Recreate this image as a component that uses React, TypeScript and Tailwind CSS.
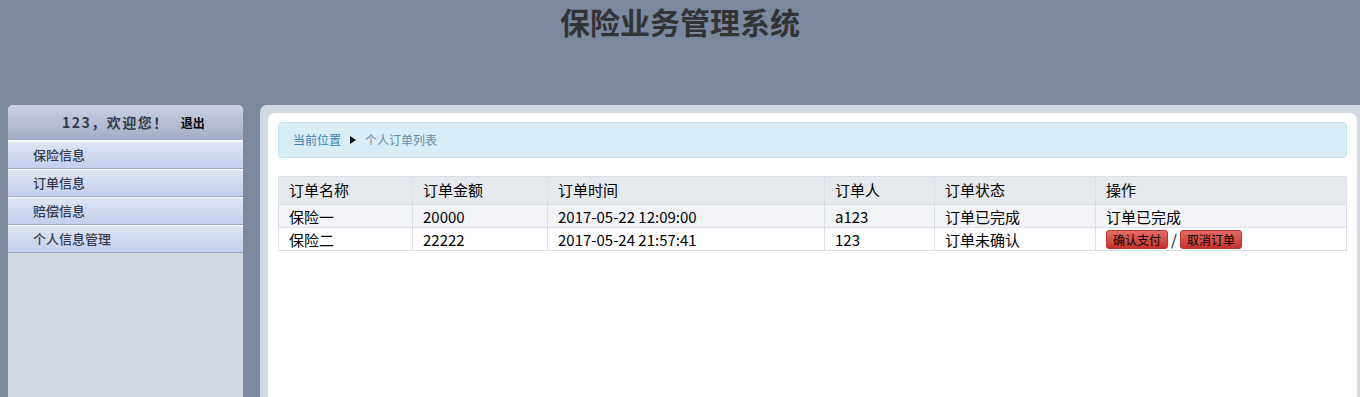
import React from 'react'

const font = { fontFamily: '"Noto Sans CJK SC", "Noto Sans", sans-serif' }

const menu = ['保险信息', '订单信息', '赔偿信息', '个人信息管理']

const orders = [
  { name: '保险一', amount: '20000', time: '2017-05-22 12:09:00', user: 'a123', status: '订单已完成', done: true },
  { name: '保险二', amount: '22222', time: '2017-05-24 21:57:41', user: '123', status: '订单未确认', done: false },
]

const cols = ['w-[134px]', 'w-[135px]', 'w-[277px]', 'w-[110px]', 'w-[161px]', '']

function RedButton({ children }: { children: React.ReactNode }) {
  return (
    <button className="h-[19px] px-[6px] text-[12px] leading-[17px] text-black rounded-[3px] border border-[#b33a36] bg-gradient-to-b from-[#e46a66] to-[#c9302c]">
      {children}
    </button>
  )
}

export default function App() {
  return (
    <div className="h-screen overflow-hidden bg-[#7b889e] flex flex-col" style={font}>
      {/* Header */}
      <div className="h-[105px] shrink-0 flex justify-center">
        <h1 className="text-[30px] font-bold text-[#333333] leading-[42px]">保险业务管理系统</h1>
      </div>

      <div className="flex-1 flex min-h-0">
        {/* Sidebar */}
        <div className="ml-2 w-[235px] bg-[#d2d8e2] rounded-t-[5px] overflow-hidden">
          <div className="h-[36px] flex items-center bg-gradient-to-b from-[#cbd1e2] to-[#a4acc6] border-b border-white">
            <span className="ml-[54px] text-[14px] font-bold text-[#333b4c] tracking-[1.5px]">123，欢迎您！</span>
            <span className="ml-[12px] text-[12px] font-bold text-black">退出</span>
          </div>
          {menu.map((m) => (
            <div
              key={m}
              className="h-[28px] flex items-center pl-[25px] text-[13px] text-[#333b4c] font-medium bg-gradient-to-b from-[#e0e4f4] to-[#c3cfee] border-b border-[#9aa5c2] border-t border-t-white first:border-t-0"
            >
              {m}
            </div>
          ))}
        </div>

        {/* Main */}
        <div className="ml-[17px] flex-1 bg-[#d2d8e2] rounded-tl-[7px] pl-2 pt-2 pr-[3px]">
          <div className="h-full bg-white rounded-t-[7px] px-[10px] pt-[9px]">
            <div className="h-[36px] flex items-center pl-[14px] bg-[#d8edf6] border border-[#c5e6f1] rounded-[4px] text-[12px]">
              <span className="text-[#3d84b0]">当前位置</span>
              <svg width="6" height="8" viewBox="0 0 6 8" className="ml-[9px] mr-[9px]">
                <path d="M0 0 L6 4 L0 8 Z" fill="#111" />
              </svg>
              <span className="text-[#6d8ba8]">个人订单列表</span>
            </div>

            <table className="mt-[18px] w-full border-collapse text-[15px] text-black">
              <thead>
                <tr className="bg-[#e6e9ee] h-[28px]">
                  {['订单名称', '订单金额', '订单时间', '订单人', '订单状态', '操作'].map((h, i) => (
                    <th key={h} className={`${cols[i]} border border-[#dcdfe5] text-left font-normal pl-[10px] py-0`}>
                      {h}
                    </th>
                  ))}
                </tr>
              </thead>
              <tbody>
                {orders.map((o, idx) => (
                  <tr key={o.name} className={`h-[23px] ${idx === 0 ? 'bg-[#f2f3f7]' : 'bg-white'}`}>
                    <td className="border border-[#dcdfe5] pl-[10px] py-0 leading-[21px]">{o.name}</td>
                    <td className="border border-[#dcdfe5] pl-[10px] py-0 leading-[21px]">{o.amount}</td>
                    <td className="border border-[#dcdfe5] pl-[10px] py-0 leading-[21px]">{o.time}</td>
                    <td className="border border-[#dcdfe5] pl-[10px] py-0 leading-[21px]">{o.user}</td>
                    <td className="border border-[#dcdfe5] pl-[10px] py-0 leading-[21px]">{o.status}</td>
                    <td className="border border-[#dcdfe5] pl-[10px] py-0 leading-[21px]">
                      {o.done ? (
                        '订单已完成'
                      ) : (
                        <div className="flex items-center">
                          <RedButton>确认支付</RedButton>
                          <span className="mx-[3px] text-[15px]">/</span>
                          <RedButton>取消订单</RedButton>
                        </div>
                      )}
                    </td>
                  </tr>
                ))}
              </tbody>
            </table>
          </div>
        </div>
      </div>
    </div>
  )
}
